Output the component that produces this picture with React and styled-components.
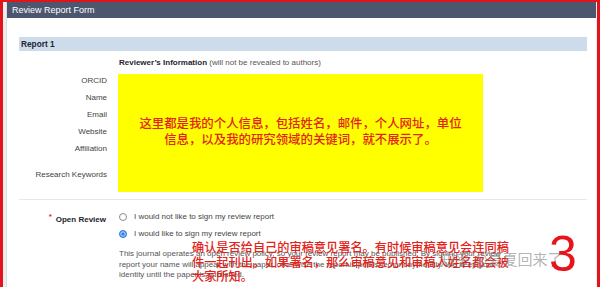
import React from "react";
import styled, { createGlobalStyle } from "styled-components";

const GlobalStyle = createGlobalStyle`
  html, body {
    margin: 0;
    padding: 0;
    background: #ffffff;
    overflow: hidden;
  }
  body {
    font-family: "Liberation Sans", Arial, sans-serif;
  }
`;

const Frame = styled.div`
  position: relative;
  box-sizing: border-box;
  width: 600px;
  height: 287px;
  border-top: 2px solid #e3131b;
  border-left: 3px solid #e3131b;
  border-right: 3px solid #e3131b;
  padding-left: 3px;
  padding-right: 1px;
  background: #eeeeee;
  overflow: hidden;
`;

const Panel = styled.div`
  height: 100%;
  background: #ffffff;
  border-left: 1px solid #dcdcdc;
`;

const Header = styled.div`
  height: 16px;
  background: #4c566f;
  color: #ffffff;
  font-size: 9px;
  line-height: 16px;
  padding-left: 5px;
`;

const Section = styled.div`
  padding: 19px 9px 0 12px;
`;

const ReportBar = styled.div`
  height: 14px;
  background: #cddcea;
  font-size: 8.3px;
  font-weight: bold;
  line-height: 14px;
  padding-left: 2px;
  color: #1f2530;
`;

const Row = styled.div`
  display: flex;
  gap: 11px;
  margin-top: ${(p) => p.top || 0}px;
`;

const LabelCol = styled.div`
  width: 88px;
  flex: none;
  display: flex;
  flex-direction: column;
  align-items: flex-end;
  margin-top: ${(p) => p.shift || 0}px;
`;

const Label = styled.div`
  font-size: 8px;
  line-height: 17px;
  color: #444;
  margin-top: ${(p) => p.gap || 0}px;
  font-weight: ${(p) => (p.bold ? "bold" : "normal")};
  ${(p) => p.bold && "color: #1f2530; margin-right: 1px;"}
`;

const Star = styled.span`
  color: #e0262d;
  font-size: 8px;
  vertical-align: 3px;
  margin-right: 4px;
`;

const Content = styled.div`
  flex: 1;
`;

const InfoHead = styled.div`
  margin: 6px 0 6px 100px;
  font-size: 8px;
  line-height: 11px;
  color: #555;
  b {
    color: #1f2530;
  }
`;

const YellowBox = styled.div`
  width: 365px;
  height: 118px;
  background: #ffff00;
  display: flex;
  align-items: center;
  justify-content: center;
  padding-bottom: 4px;
  box-sizing: border-box;
`;

const CnText = styled.div`
  font-family: "Noto Sans CJK SC", sans-serif;
  font-size: 12.4px;
  line-height: 16px;
  font-weight: 500;
  color: #e2231a;
  text-align: center;
`;

const Divider = styled.div`
  height: 1px;
  background: #e4e7ee;
  margin-top: 7px;
`;

const Option = styled.div`
  display: flex;
  align-items: center;
  height: 17px;
  font-size: 8px;
  color: #444;
  gap: 7px;
`;

const Radio = styled.span`
  box-sizing: border-box;
  width: 8px;
  height: 8px;
  margin-left: 1px;
  border-radius: 50%;
  border: 1px solid ${(p) => (p.checked ? "#2f7be0" : "#8a8a8a")};
  background: ${(p) => (p.checked ? "#2f7be0" : "#fff")};
  box-shadow: ${(p) => (p.checked ? "inset 0 0 0 1.5px #9cc2f2" : "none")};
`;

const Policy = styled.p`
  margin: 7px 0 0 1px;
  font-size: 8px;
  line-height: 10.5px;
  color: #555;
  white-space: nowrap;
`;

const Note = styled.div`
  position: absolute;
  left: 189px;
  top: 238px;
  font-family: "Noto Sans CJK SC", sans-serif;
  font-size: 12.2px;
  line-height: 14.5px;
  font-weight: 500;
  color: #e2231a;
  white-space: nowrap;
`;

const Watermark = styled.div`
  position: absolute;
  left: 437px;
  top: 248px;
  font-family: "Noto Sans CJK SC", sans-serif;
  font-size: 15px;
  line-height: 18px;
  color: rgba(130, 130, 130, 0.6);
  white-space: nowrap;
`;

const BigNumber = styled.div`
  position: absolute;
  left: 546px;
  top: 227px;
  font-size: 50px;
  line-height: 50px;
  color: #e8141c;
`;

const labels = ["ORCID", "Name", "Email", "Website", "Affiliation"];

export default function App() {
  return (
    <>
      <GlobalStyle />
      <Frame>
        <Panel>
          <Header>Review Report Form</Header>
          <Section>
            <ReportBar>Report 1</ReportBar>
            <InfoHead>
              <b>Reviewer’s Information</b> (will not be revealed to authors)
            </InfoHead>
            <Row>
              <LabelCol shift={-2}>
                {labels.map((l) => (
                  <Label key={l}>{l}</Label>
                ))}
                <Label gap={9}>Research Keywords</Label>
              </LabelCol>
              <YellowBox>
                <CnText>
                  这里都是我的个人信息，包括姓名，邮件，个人网址，单位
                  <br />
                  信息，以及我的研究领域的关键词，就不展示了。
                </CnText>
              </YellowBox>
            </Row>
            <Divider />
            <Row top={8}>
              <LabelCol>
                <Label bold>
                  <Star>*</Star>Open Review
                </Label>
              </LabelCol>
              <Content>
                <Option>
                  <Radio />I would not like to sign my review report
                </Option>
                <Option>
                  <Radio checked />I would like to sign my review report
                </Option>
                <Policy>
                  This journal operates an open review policy, so your review report may be published. By signing your review
                  <br />
                  report your name will appear with the paper, otherwise the report is published anonymously. We keep your
                  <br />
                  identity until the paper is published.
                </Policy>
              </Content>
            </Row>
          </Section>
        </Panel>
        <Note>
          确认是否给自己的审稿意见署名。有时候审稿意见会连同稿
          <br />
          件一起刊出。如果署名，那么审稿意见和审稿人姓名都会被
          <br />
          大家所知。
        </Note>
        <Watermark>知乎 @夏夏回来了</Watermark>
        <BigNumber>3</BigNumber>
      </Frame>
    </>
  );
}
